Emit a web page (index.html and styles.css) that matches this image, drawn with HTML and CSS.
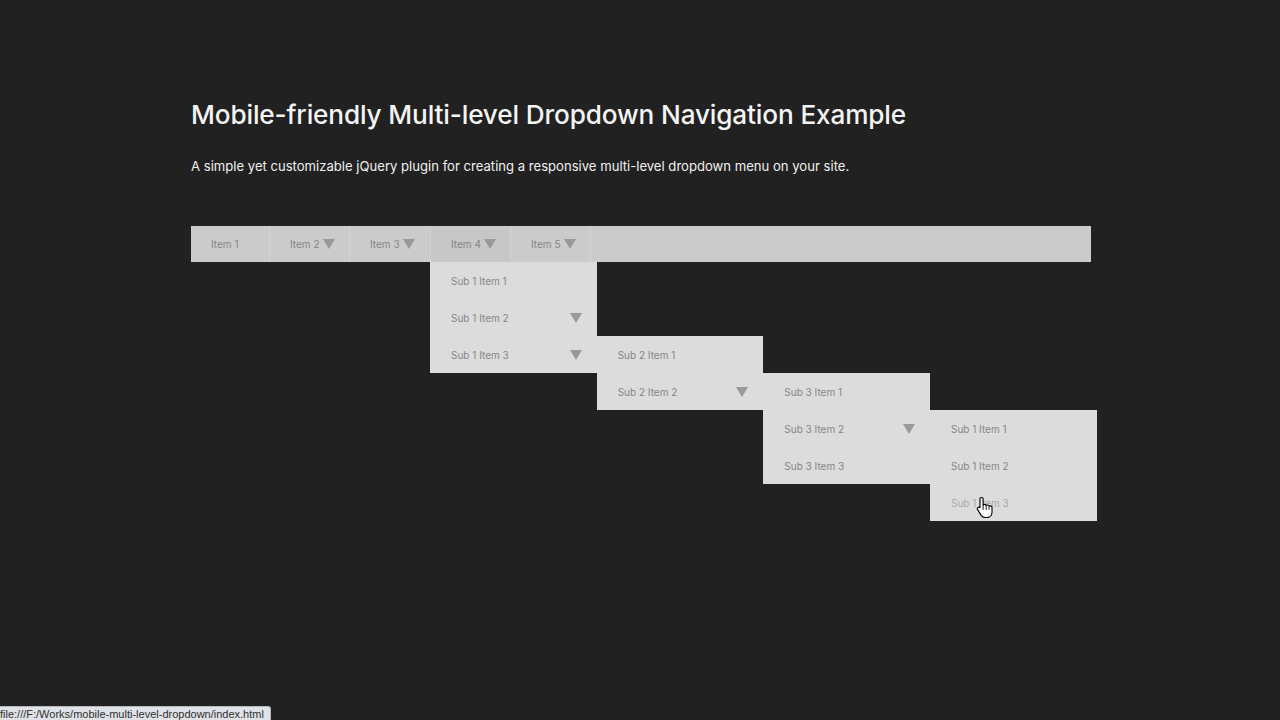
FILE: index.html
```html
<!DOCTYPE html>
<html lang="en">
<head>
<meta charset="utf-8">
<title>Mobile-friendly Multi-level Dropdown Navigation Example</title>
<link rel="stylesheet" href="styles.css">
</head>
<body>
<div class="page">
  <h1 class="title">Mobile-friendly Multi-level Dropdown Navigation Example</h1>
  <p class="lead">A simple yet customizable jQuery plugin for creating a responsive multi-level dropdown menu on your site.</p>
  <nav class="nav">
    <ul class="menu">
      <li class="top"><span class="link">Item 1</span></li>
      <li class="top"><span class="link">Item 2<i class="caret"></i></span></li>
      <li class="top"><span class="link">Item 3<i class="caret"></i></span></li>
      <li class="top active"><span class="link">Item 4<i class="caret"></i></span>
        <ul class="sub sub-down">
          <li><span class="row">Sub 1 Item 1</span></li>
          <li><span class="row">Sub 1 Item 2<i class="caret"></i></span></li>
          <li><span class="row">Sub 1 Item 3<i class="caret"></i></span>
            <ul class="sub sub-side">
              <li><span class="row">Sub 2 Item 1</span></li>
              <li><span class="row">Sub 2 Item 2<i class="caret"></i></span>
                <ul class="sub sub-side">
                  <li><span class="row">Sub 3 Item 1</span></li>
                  <li><span class="row">Sub 3 Item 2<i class="caret"></i></span>
                    <ul class="sub sub-side">
                      <li><span class="row">Sub 1 Item 1</span></li>
                      <li><span class="row">Sub 1 Item 2</span></li>
                      <li class="hover"><span class="row">Sub 1 Item 3</span>
                        <svg class="cursor" width="18" height="22" viewBox="0 0 18 22">
                          <path d="M5.5 1.5c1 0 1.6.7 1.6 1.6v6.2c.3-.6.9-.9 1.5-.9.9 0 1.5.6 1.6 1.3.3-.4.8-.7 1.4-.7.9 0 1.5.6 1.6 1.4.3-.3.8-.5 1.2-.5 1 0 1.6.8 1.6 1.7v4.6c0 3.2-2.3 5.4-5.4 5.4H9.4c-1.8 0-3.2-.8-4.2-2.2L1.6 13.6c-.5-.8-.3-1.7.4-2.2.7-.4 1.5-.3 2 .3V3.1C3.9 2.2 4.5 1.5 5.5 1.5z" fill="#fff" stroke="#000" stroke-width="1.1" stroke-linejoin="round"/>
                          <path d="M10.2 10.2v3.6M13 10.8v3M7.1 9.3v4.5" stroke="#000" stroke-width="0.9" fill="none"/>
                        </svg>
                      </li>
                    </ul>
                  </li>
                  <li><span class="row">Sub 3 Item 3</span></li>
                </ul>
              </li>
            </ul>
          </li>
        </ul>
      </li>
      <li class="top"><span class="link">Item 5<i class="caret"></i></span></li>
    </ul>
  </nav>
</div>
<div class="status"><span class="status-text">file:///F:/Works/mobile-multi-level-dropdown/index.html</span></div>
</body>
</html>
```

FILE: styles.css
```css
html, body {
  margin: 0;
  padding: 0;
}
body {
  background: #212121;
  font-family: Inter, "Noto Sans", "Liberation Sans", sans-serif;
  color: #ffffff;
  height: 720px;
  overflow: hidden;
}
.page {
  width: 900px;
  margin: 0 auto;
  padding-top: 99px;
  position: relative;
  left: 1px;
}
.title {
  margin: 0;
  font-size: 26.2px;
  line-height: 32px;
  font-weight: 500;
  letter-spacing: -0.15px;
  color: #f4f4f4;
  white-space: nowrap;
}
.lead {
  margin: 25px 0 0;
  font-size: 13.1px;
  line-height: 20px;
  color: #f0f0f0;
  white-space: nowrap;
}
.nav {
  margin-top: 50px;
  background: #cbcbcb;
  height: 36px;
}
.menu, .sub {
  list-style: none;
  margin: 0;
  padding: 0;
}
.menu {
  display: flex;
  height: 36px;
}
.top {
  position: relative;
  flex-shrink: 0;
  border-right: 1px solid #d3d3d3;
}
.top.active {
  background: #c7c7c7;
}
.link {
  display: flex;
  align-items: center;
  height: 36px;
  padding: 0 0 0 20px;
  font-size: 10px;
  color: #858585;
  box-sizing: border-box;
  width: 79px;
  white-space: nowrap;
}
.top:nth-child(1) .link { width: 78px; }
.top:nth-child(3) .link { width: 80px; }
.link .caret {
  margin-left: 3px;
}
.caret {
  display: inline-block;
  flex-shrink: 0;
  width: 0;
  height: 0;
  border-left: 6px solid transparent;
  border-right: 6px solid transparent;
  border-top: 10px solid #999999;
}
.sub {
  position: absolute;
  width: 166.67px;
  background: #dcdcdc;
  z-index: 2;
}
.sub-down {
  top: 36px;
  left: -1px;
}
.sub-side {
  top: 0;
  left: 100%;
}
.sub li {
  position: relative;
}
.row {
  display: flex;
  align-items: center;
  justify-content: space-between;
  height: 37px;
  padding: 0 15px 0 21px;
  font-size: 10px;
  color: #868686;
  white-space: nowrap;
}
.hover .row {
  color: #a9a9a9;
}
.cursor {
  position: absolute;
  left: 46px;
  top: 12px;
}
.status {
  position: fixed;
  left: 0;
  bottom: 0;
  height: 13px;
  padding-right: 6px;
  background: #dfe2e6;
  border-top: 1px solid #b8b8b8;
  border-right: 1px solid #b8b8b8;
  border-top-right-radius: 3px;
  font-family: "Liberation Sans", Arial, sans-serif;
  font-size: 11px;
  line-height: 14px;
  color: #303030;
  white-space: nowrap;
}
.status-text {
  display: inline-block;
}
```
